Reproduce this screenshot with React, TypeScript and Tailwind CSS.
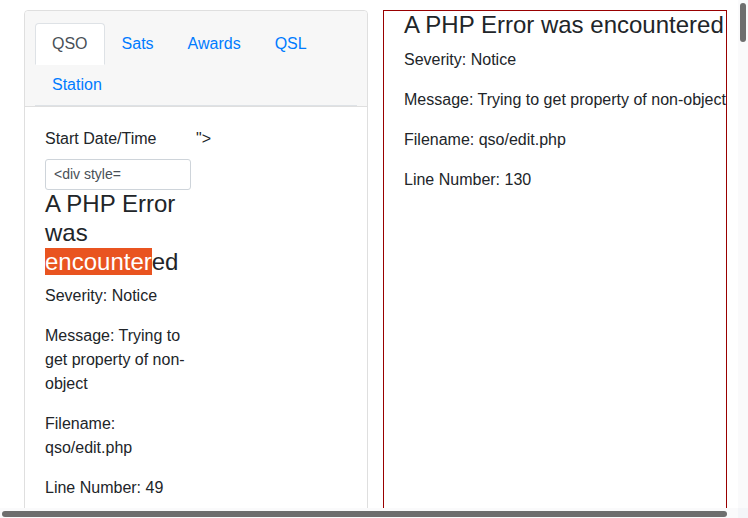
import React from "react";

const tabs = ["QSO", "Sats", "Awards", "QSL", "Station"];

function ErrorBlock({ line, narrow }: { line: number; narrow?: boolean }) {
  return (
    <>
      <h4 className="mt-0 mb-2 text-[24px] leading-[1.2] font-medium">
        {narrow ? (
          <>
            A PHP Error was <span className="bg-[#e95420] text-white">encounter</span>ed
          </>
        ) : (
          "A PHP Error was encountered"
        )}
      </h4>
      <p className="mb-4">Severity: Notice</p>
      <p className="mb-4">Message: Trying to get property of non-object</p>
      <p className="mb-4">Filename: qso/edit.php</p>
      <p className="mb-4">Line Number: {line}</p>
    </>
  );
}

export default function App() {
  return (
    <div className="relative h-[518px] w-[748px] overflow-hidden bg-white font-['Liberation_Sans',Arial,sans-serif] text-base leading-6 text-[#212529]">
      <div className="flex h-[800px] w-[747px] gap-[15px] pl-6 pt-2.5">
        {/* QSO edit card */}
        <div className="flex w-[344px] shrink-0 flex-col rounded border border-[#dfdfdf]">
          <div className="rounded-t border-b border-[#dfdfdf] bg-[#f7f7f7] px-5 pt-3">
            <ul className="-mx-2.5 flex flex-wrap border-b border-[#dee2e6]">
              {tabs.map((t, i) => (
                <li key={t} className="-mb-px">
                  <span
                    className={`block rounded-t border px-4 py-2 ${
                      i === 0
                        ? "border-[#dee2e6] border-b-white bg-white text-[#495057]"
                        : "border-transparent text-[#007bff]"
                    }`}
                  >
                    {t}
                  </span>
                </li>
              ))}
            </ul>
          </div>
          <div className="flex flex-1 items-start p-5">
            <div className="w-[146px] shrink-0">
              <label className="mb-2 block">Start Date/Time</label>
              <div className="h-[31px] w-[146px] rounded-[3px] border border-[#ced4da] px-2 py-1 text-sm leading-[21px] text-[#495057]">
                {"<div style="}
              </div>
              <ErrorBlock line={49} narrow />
            </div>
            <span className="pl-[5px]">{'">'}</span>
          </div>
        </div>

        {/* PHP error box */}
        <div className="w-[344px] shrink-0 overflow-hidden whitespace-nowrap border border-[#990000] pl-5">
          <ErrorBlock line={130} />
        </div>
      </div>

      {/* window scrollbars */}
      <div className="absolute right-0 top-0 h-[508px] w-[10px] bg-[#fafafb]">
        <div className="ml-[2px] mt-[3px] h-[39px] w-[6px] rounded-full bg-[#6e6e6e]" />
      </div>
      <div className="absolute bottom-0 left-0 h-[10px] w-[738px] bg-[#fafafb]">
        <div className="ml-[2px] mt-[3px] h-[6px] w-[725px] rounded-full bg-[#6e6e6e]" />
      </div>
      <div className="absolute bottom-0 right-0 h-[10px] w-[10px] bg-[#f4f5f8]" />
    </div>
  );
}
